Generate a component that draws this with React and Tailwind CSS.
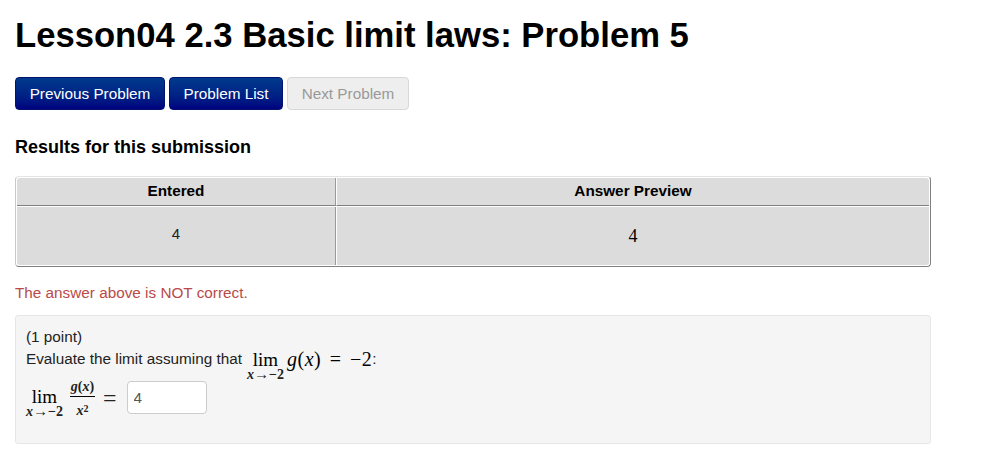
import React from "react";

const serif = "font-['Liberation_Serif',serif]";

function LimUnder({ className = "" }) {
  return (
    <span className={`inline-flex flex-col items-center ${serif} ${className}`}>
      <span className="text-[19px] leading-[18px] text-black">lim</span>
      <span className="text-[14px] leading-[8px] pt-[1px] font-bold text-[#222] whitespace-nowrap">
        <i>x</i><span className="font-normal text-[15px]">→</span>−2
      </span>
    </span>
  );
}

function Cell({ children, className = "" }) {
  return <div className={`bg-[#dcdcdc] flex items-center justify-center ${className}`}>{children}</div>;
}

export default function App() {
  return (
    <div className="w-[982px] h-[465px] bg-white overflow-hidden font-['Liberation_Sans',Arial,sans-serif] text-black pl-[15px] pr-[51px]">
      <h1 className="text-[34.65px] leading-[38px] font-bold pt-[16px] h-[54px] box-content">Lesson04 2.3 Basic limit laws: Problem 5</h1>

      <div className="flex gap-[4px] mt-[7px]">
        <button className="h-[33px] w-[150px] pt-[1px] rounded-[4px] border border-[#00146e] bg-gradient-to-b from-[#003a8c] to-[#00007f] text-white text-[15.3px]">Previous Problem</button>
        <button className="h-[33px] w-[114px] pt-[1px] rounded-[4px] border border-[#00146e] bg-gradient-to-b from-[#003a8c] to-[#00007f] text-white text-[15.3px]">Problem List</button>
        <button className="h-[33px] w-[122px] pt-[1px] rounded-[4px] border border-[#d8d8d8] bg-[#eeeeee] text-[#999999] text-[15.3px]">Next Problem</button>
      </div>

      <h2 className="text-[18px] leading-[20px] font-bold mt-[27px]">Results for this submission</h2>

      <div className="mt-[19px] w-[916px] h-[91px] rounded-[4px] border border-t-[#e4e4e4] border-l-[#c8c8c8] border-r-[#808080] border-b-[#808080] bg-white p-px grid grid-cols-[319px_1fr] grid-rows-[29px_1fr] overflow-hidden">
        <Cell className="rounded-tl-[3px] border-r border-b border-r-[#999] border-b-[#808080] mb-px text-[15.3px] font-bold">Entered</Cell>
        <Cell className="rounded-tr-[3px] border-l border-b border-l-white border-b-[#808080] mb-px text-[15.3px] font-bold">Answer Preview</Cell>
        <Cell className="rounded-bl-[3px] border-r border-r-[#999] pb-[3px] text-[15px] text-[#222]">4</Cell>
        <Cell className={`rounded-br-[3px] border-l border-l-white text-[18px] ${serif}`}>4</Cell>
      </div>

      <p className="mt-[16px] text-[15.3px] leading-[20px] text-[#b94a48]">The answer above is NOT correct.</p>

      <div className="mt-[12px] w-[916px] h-[129px] rounded-[3px] border border-[#e6e6e6] bg-[#f5f5f5] pl-[10px] pt-[12px] text-[15.3px] text-[#222]">
        <div className="leading-[18px]">(1 point)</div>
        <div className="flex items-start h-[25px] mt-[4px] leading-[18px]">
          <span className="mr-[5px]">Evaluate the limit assuming that</span>
          <LimUnder className="mt-[1px]" />
          <span className={`${serif} text-[20px] leading-[18px] ml-[3px] text-black whitespace-pre [word-spacing:3px] tracking-[0.5px]`}><i>g</i>(<i>x</i>) = −2</span>
          <span>:</span>
        </div>
        <div className="flex items-start h-[36px] mt-[6px]">
          <LimUnder className="mt-[7px]" />
          <span className={`inline-flex flex-col items-center -mt-[1px] ml-[7px] ${serif} text-[14px] font-bold leading-[13px]`}>
            <span className="pb-[3px]"><i>g</i>(<i>x</i>)</span>
            <span className="w-[25px] h-px bg-black" />
            <span className="pt-[7px]"><i>x</i><sup className="text-[10px] -top-[3px]">2</sup></span>
          </span>
          <span className={`${serif} text-[24px] leading-[24px] mt-[5px] ml-[8px]`}>=</span>
          <input
            readOnly
            value="4"
            className="ml-[10px] w-[80px] h-[33px] rounded-[4px] border border-[#cccccc] bg-white px-[6px] text-[15.3px] text-[#555555] outline-none"
          />
        </div>
      </div>
    </div>
  );
}
